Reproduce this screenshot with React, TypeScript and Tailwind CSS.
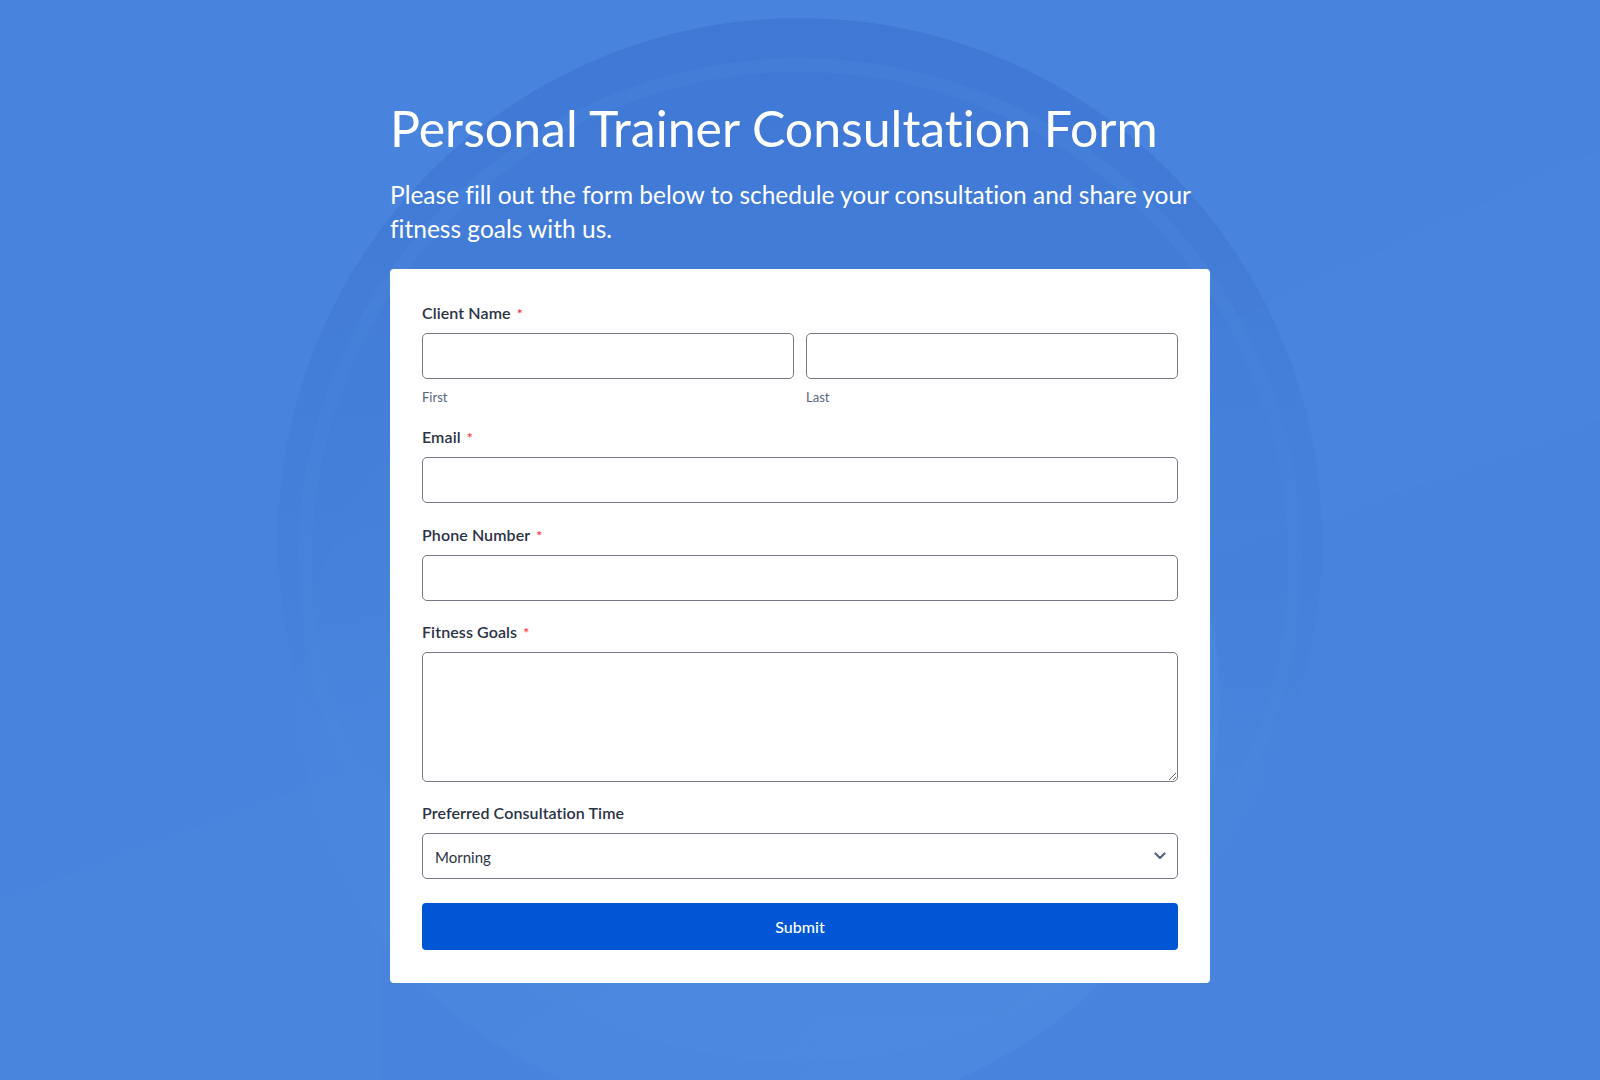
import React from "react";

function Label({ text, required = true }: { text: string; required?: boolean }) {
  return (
    <label className="flex items-center text-[16px] leading-[20px] font-semibold text-[#2c3345] mb-[10px] tracking-[0.1px]">
      {text}
      {required && <span className="text-[#f23a3c] text-[14px] leading-[14px] ml-[6px] mt-[2px]">*</span>}
    </label>
  );
}

const inputCls =
  "block w-full h-[46px] rounded-[5px] border border-[#747985] bg-white px-3 text-[15px] text-[#2c3345] outline-none";

export default function App() {
  return (
    <div className="relative min-h-[1080px] w-full overflow-hidden bg-[#4884dd] font-['Lato',sans-serif] [font-variant-ligatures:none]">
      <svg className="absolute inset-0 h-full w-full" viewBox="0 0 1600 1080" preserveAspectRatio="none">
        <defs>
          <linearGradient id="g1" x1="0" y1="0" x2="0" y2="1">
            <stop offset="0" stopColor="#3f78d5" />
            <stop offset="0.5" stopColor="#4581da" />
            <stop offset="1" stopColor="#4a88df" />
          </linearGradient>
          <linearGradient id="g2" x1="0" y1="0" x2="1" y2="1">
            <stop offset="0" stopColor="#4a88df" stopOpacity="0" />
            <stop offset="1" stopColor="#4f8de2" stopOpacity="0.6" />
          </linearGradient>
        </defs>
        <circle cx="800" cy="540" r="522" fill="url(#g1)" />
        <circle cx="800" cy="560" r="495" fill="none" stroke="#4a87de" strokeOpacity="0.35" strokeWidth="14" />
        <ellipse cx="760" cy="700" rx="460" ry="420" fill="url(#g2)" />
        <polygon points="0,900 380,760 380,1080 0,1080" fill="#4d8be1" fillOpacity="0.2" />
        <polygon points="1210,330 1600,150 1600,420 1210,560" fill="#4d8be1" fillOpacity="0.15" />
      </svg>

      <div className="relative mx-auto w-[820px] pt-[98px]">
        <h1 className="text-[50px] leading-[60px] font-normal text-white">
          Personal Trainer Consultation Form
        </h1>
        <p className="mt-[20px] text-[24.5px] leading-[34px] text-white">
          Please fill out the form below to schedule your consultation and share your fitness goals with us.
        </p>

        <div className="mt-[23px] rounded-[4px] bg-white px-8 pt-[34px] pb-[33px]">
          <Label text="Client Name" />
          <div className="grid grid-cols-2 gap-3">
            <div>
              <input className={inputCls} />
              <div className="mt-[10px] text-[13px] leading-[16px] text-[#57647e]">First</div>
            </div>
            <div>
              <input className={inputCls} />
              <div className="mt-[10px] text-[13px] leading-[16px] text-[#57647e]">Last</div>
            </div>
          </div>

          <div className="mt-[22px]">
            <Label text="Email" />
            <input className={inputCls} />
          </div>

          <div className="mt-[22px]">
            <Label text="Phone Number" />
            <input className={inputCls} />
          </div>

          <div className="mt-[21px]">
            <Label text="Fitness Goals" />
            <textarea className="block w-full h-[130px] rounded-[5px] border border-[#747985] bg-white px-3 py-2 text-[15px] outline-none" />
          </div>

          <div className="mt-[21px]">
            <Label text="Preferred Consultation Time" required={false} />
            <div className="relative">
              <select className={inputCls + " appearance-none pr-10 pt-[2px]"} defaultValue="Morning">
                <option>Morning</option>
                <option>Afternoon</option>
                <option>Evening</option>
              </select>
              <svg
                className="pointer-events-none absolute right-[12px] top-1/2 -translate-y-1/2"
                width="12"
                height="8"
                viewBox="0 0 12 8"
              >
                <path d="M1.5 1.5 L6 6 L10.5 1.5" fill="none" stroke="#57647e" strokeWidth="2.2" strokeLinecap="round" strokeLinejoin="round" />
              </svg>
            </div>
          </div>

          <button className="mt-[24px] block h-[47px] w-full rounded-[4px] bg-[#0156d5] text-[16px] font-medium text-white">
            Submit
          </button>
        </div>
      </div>
    </div>
  );
}
